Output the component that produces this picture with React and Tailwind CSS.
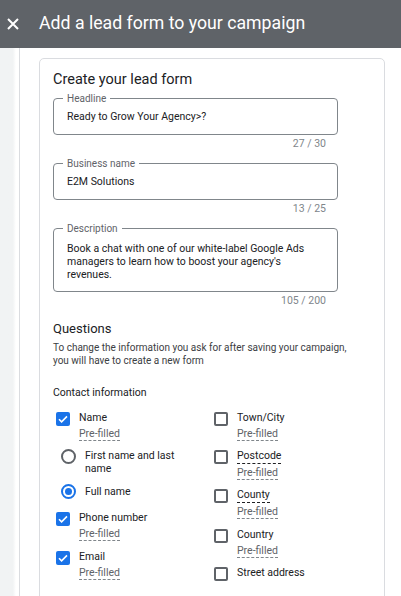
import React from "react";

const Check = ({ on }) =>
  on ? (
    <span className="w-[14px] h-[14px] rounded-[2px] bg-[#1a73e8] flex items-center justify-center shrink-0">
      <svg viewBox="0 0 14 14" className="w-[14px] h-[14px]">
        <path d="M3 7.2l2.6 2.6L11 4.4" fill="none" stroke="#fff" strokeWidth="1.6" />
      </svg>
    </span>
  ) : (
    <span className="block w-[14px] h-[14px] rounded-[2px] border-2 border-[#5f6368] shrink-0" />
  );

const Radio = ({ on }) => (
  <span
    className={`w-[15px] h-[15px] rounded-full border-2 flex items-center justify-center shrink-0 ${
      on ? "border-[#1a73e8]" : "border-[#5f6368]"
    }`}
  >
    {on && <span className="w-[7px] h-[7px] rounded-full bg-[#1a73e8]" />}
  </span>
);

const PreFilled = () => (
  <span className="inline-block text-[10.5px] leading-[13px] text-[#5f6368] border-b border-dashed border-[#80868b] mt-[2px]">
    Pre-filled
  </span>
);

const Item = ({ on, label, pre = true, dashed = false, className = "" }) => (
  <div className={`flex ${className}`}>
    <div className="pt-[1px] pl-[3px]">
      <Check on={on} />
    </div>
    <div className="pl-[9px] flex flex-col items-start">
      <span
        className={`text-[10.5px] leading-[14px] text-[#202124] ${
          dashed ? "border-b border-dashed border-[#202124]" : ""
        }`}
      >
        {label}
      </span>
      {pre && <PreFilled />}
    </div>
  </div>
);

const Field = ({ label, children, count, tall }) => (
  <div>
    <div
      className={`relative border border-[#80868b] rounded-[4px] w-[285px] px-[13px] text-[10.5px] text-[#202124] ${
        tall ? "h-[64px] pt-[13px] leading-[13px]" : "h-[37px] flex items-center"
      }`}
    >
      <span className="absolute -top-[7px] left-[9px] px-[4px] bg-white text-[10px] leading-[13px] text-[#5f6368]">
        {label}
      </span>
      <span className="pr-[2px] block">{children}</span>
    </div>
    <div className="w-[285px] pr-[12px] text-right text-[10.5px] leading-[14px] text-[#80868b] mt-[2px]">
      {count}
    </div>
  </div>
);

export default function App() {
  return (
    <div className="w-[401px] h-[596px] overflow-hidden bg-white font-['Roboto','Liberation_Sans',sans-serif]">
      <div className="h-12 bg-[#5f6368] flex items-center text-white">
        <svg viewBox="0 0 12 12" className="w-[12px] h-[12px] ml-[7px]">
          <path d="M1 1l10 10M11 1L1 11" stroke="#fff" strokeWidth="2" />
        </svg>
        <span className="ml-[20px] text-[17.7px] leading-none">
          Add a lead form to your campaign
        </span>
      </div>

      <div className="flex h-[548px]">
        <div className="w-[16px] bg-gradient-to-r from-[#f1f3f4] from-80% to-white" />
        <div className="w-[3px]" />
        <div className="w-px bg-[#dadce0]" />
        <div className="pl-[19px] pt-[10px]">
          <div className="w-[346px] h-[560px] border border-[#dadce0] rounded-[5px] px-[13px] pt-[11px]">
            <div className="text-[14.5px] leading-[20px] text-[#202124]">Create your lead form</div>

            <div className="mt-[8px]">
              <Field label="Headline" count="27 / 30">
                Ready to Grow Your Agency&gt;?
              </Field>
            </div>
            <div className="mt-[12px]">
              <Field label="Business name" count="13 / 25">
                E2M Solutions
              </Field>
            </div>
            <div className="mt-[12px]">
              <Field label="Description" count="105 / 200" tall>
                Book a chat with one of our white-label Google Ads managers to learn how to boost your agency's revenues.
              </Field>
            </div>

            <div className="mt-[12px] text-[13px] leading-[18px] text-[#202124]">Questions</div>
            <div className="mt-[4px] text-[10px] leading-[12.5px] text-[#3c4043]">
              To change the information you ask for after saving your campaign,
              <br />
              you will have to create a new form
            </div>
            <div className="mt-[19px] text-[10.5px] leading-[14px] text-[#202124]">Contact information</div>

            <div className="mt-[11px] grid grid-cols-[158px_1fr]">
              <div className="flex flex-col">
                <Item on label="Name" />
                <div className="flex mt-[8px] pl-[8px]">
                  <Radio />
                  <span className="pl-[9px] text-[10.5px] leading-[13px] text-[#202124] w-[110px]">
                    First name and last name
                  </span>
                </div>
                <div className="flex items-center mt-[9px] pl-[8px]">
                  <Radio on />
                  <span className="pl-[9px] text-[10.5px] leading-[13px] text-[#202124]">Full name</span>
                </div>
                <Item on label="Phone number" className="mt-[12px]" />
                <Item on label="Email" className="mt-[9px]" />
              </div>
              <div className="flex flex-col">
                <Item label="Town/City" />
                <Item label="Postcode" dashed className="mt-[8px]" />
                <Item label="County" dashed className="mt-[8px]" />
                <Item label="Country" className="mt-[9px]" />
                <Item label="Street address" pre={false} className="mt-[8px]" />
              </div>
            </div>
          </div>
        </div>
      </div>
    </div>
  );
}
